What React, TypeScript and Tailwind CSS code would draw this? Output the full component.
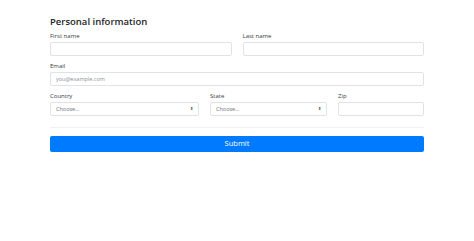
export default function App() {
  const input =
    "block w-full h-[14px] rounded-[2px] border border-[#dfe3e8] bg-white px-[5px] text-[5.5px] text-[#495057] outline-none placeholder:text-[#8a9299]";
  const label = "block mb-[2px] text-[6px] leading-[7px] text-[#343a40]";
  const select =
    "flex items-center justify-between w-full h-[14px] rounded-[2px] border border-[#dfe3e8] bg-white px-[5px] text-[5.5px] text-[#6c757d]";

  return (
    <div
      className="w-[474px] h-[241px] bg-white px-[50px] pt-[16px]"
      style={{ fontFamily: '"Open Sans", "Noto Sans", sans-serif' }}
    >
      <h4 className="text-[9.5px] leading-[12px] font-semibold text-[#212529] mb-[5px]">
        Personal information
      </h4>

      <div className="grid grid-cols-2 gap-x-[11px] mb-[7px]">
        <div>
          <label className={label}>First name</label>
          <input className={input} />
        </div>
        <div>
          <label className={label}>Last name</label>
          <input className={input} />
        </div>
      </div>

      <div className="mb-[7px]">
        <label className={label}>Email</label>
        <input className={input} placeholder="you@example.com" />
      </div>

      <div className="grid grid-cols-[149px_117px_86px] gap-x-[11px]">
        <div>
          <label className={label}>Country</label>
          <div className={select}>
            <span>Choose...</span>
            <span className="text-[4px] leading-none text-[#343a40]">⬍</span>
          </div>
        </div>
        <div>
          <label className={label}>State</label>
          <div className={select}>
            <span>Choose...</span>
            <span className="text-[4px] leading-none text-[#343a40]">⬍</span>
          </div>
        </div>
        <div>
          <label className={label}>Zip</label>
          <input className={input} />
        </div>
      </div>

      <div className="mt-[11px] h-px bg-[#f0f1f3]" />

      <button className="block mt-[8px] w-full h-[16px] rounded-[2px] bg-[#007bff] text-white text-[7.5px] leading-none">
        Submit
      </button>
    </div>
  );
}
